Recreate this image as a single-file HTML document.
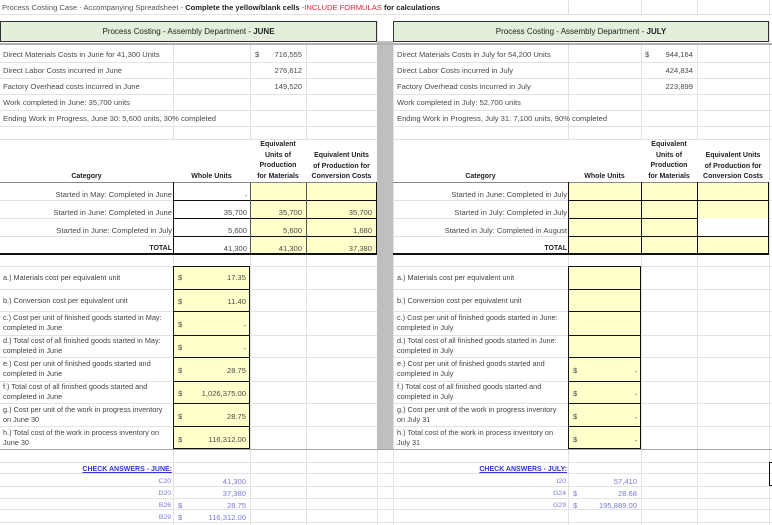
<!DOCTYPE html>
<html><head><meta charset="utf-8"><style>
*{margin:0;padding:0;box-sizing:border-box}
body{width:772px;height:525px;position:relative;background:#fff;overflow:hidden;font-family:"Liberation Sans",sans-serif;font-size:7.6px;color:#4a4a4a}
.h{position:absolute;left:0;width:772px;height:1px;background:#e2e2e2}
.v{position:absolute;top:0;height:525px;width:1px;background:#e2e2e2}
.a{position:absolute;white-space:nowrap;line-height:9px}
.r{text-align:right}
.c{text-align:center}
.y{position:absolute;background:#ffffcc}
.b{position:absolute;background:#111}
.g{position:absolute;background:#c0c0c0}
.bold{font-weight:bold;color:#222;font-size:7px}
.hd{position:absolute;text-align:center;font-weight:bold;color:#222;font-size:7px;line-height:10.5px;white-space:nowrap}
.q{position:absolute;line-height:10px;font-size:7.3px;color:#444;white-space:nowrap}
.lnk{color:#3434d0;text-decoration:underline;font-weight:bold;font-size:7px}
.pv{color:#7a7ad8}
</style></head><body>
<div class="h" style="top:14px"></div><div class="h" style="top:62px"></div><div class="h" style="top:78px"></div><div class="h" style="top:94px"></div><div class="h" style="top:110px"></div><div class="h" style="top:126px"></div><div class="h" style="top:139px"></div><div class="h" style="top:200px"></div><div class="h" style="top:218px"></div><div class="h" style="top:236px"></div><div class="h" style="top:266px"></div><div class="h" style="top:289px"></div><div class="h" style="top:311px"></div><div class="h" style="top:335px"></div><div class="h" style="top:357px"></div><div class="h" style="top:381px"></div><div class="h" style="top:403px"></div><div class="h" style="top:426px"></div><div class="h" style="top:462px"></div><div class="h" style="top:473px"></div><div class="h" style="top:486px"></div><div class="h" style="top:498px"></div><div class="h" style="top:509px"></div><div class="h" style="top:522px"></div>
<div class="v" style="left:173px"></div><div class="v" style="left:250px"></div><div class="v" style="left:306px"></div><div class="v" style="left:377px"></div><div class="v" style="left:393px"></div><div class="v" style="left:568px"></div><div class="v" style="left:641px"></div><div class="v" style="left:697px"></div><div class="v" style="left:769px"></div>
<div style="position:absolute;left:1px;top:15px;width:770px;height:6px;background:#fff"></div>
<div style="position:absolute;left:0;top:1px;width:460px;height:12px;background:#fff"></div>
<div class="g" style="left:377px;top:41px;width:16px;height:408px;background:#bfbfbf"></div>
<div class="g" style="left:0;top:43px;width:772px;height:2px;background:#b0b0b0"></div>
<div class="g" style="left:0;top:449px;width:772px;height:1px;background:#a8a8a8"></div>
<div class="a" style="left:2px;top:3px;color:#555">Process Costing Case - Accompanying Spreadsheet - <b style="color:#222">Complete the yellow/blank cells</b> <span style="color:#e8233a">-INCLUDE FORMULAS</span> <b style="color:#222">for calculations</b></div>
<div style="position:absolute;left:0;top:21px;width:377px;height:21px;background:#e2efda;border:1px solid #333"></div>
<div class="a c" style="left:0;top:27px;width:377px;color:#222;font-size:8px">Process Costing - Assembly Department - <b>JUNE</b></div>
<div style="position:absolute;left:393px;top:21px;width:376px;height:21px;background:#e2efda;border:1px solid #333"></div>
<div class="a c" style="left:393px;top:27px;width:376px;color:#222;font-size:8px">Process Costing - Assembly Department - <b>JULY</b></div>
<div class="a" style="left:3px;top:50px">Direct Materials Costs in June for 41,300 Units</div>
<div class="a" style="left:3px;top:66px">Direct Labor Costs incurred in June</div>
<div class="a" style="left:3px;top:82px">Factory Overhead costs incurred in June</div>
<div class="a" style="left:3px;top:98px">Work completed in June: 35,700 units</div>
<div class="a" style="left:3px;top:114px">Ending Work in Progress, June 30: 5,600 units, 30% completed</div>
<div class="a" style="left:255px;top:50px">$</div>
<div class="a r" style="left:250px;top:50px;width:52px">716,555</div>
<div class="a r" style="left:250px;top:66px;width:52px">276,612</div>
<div class="a r" style="left:250px;top:82px;width:52px">149,520</div>
<div class="a" style="left:397px;top:50px">Direct Materials Costs in July for 54,200 Units</div>
<div class="a" style="left:397px;top:66px">Direct Labor Costs incurred in July</div>
<div class="a" style="left:397px;top:82px">Factory Overhead costs incurred in July</div>
<div class="a" style="left:397px;top:98px">Work completed in July: 52,700 units</div>
<div class="a" style="left:397px;top:114px">Ending Work in Progress, July 31: 7,100 units, 90% completed</div>
<div class="a" style="left:645px;top:50px">$</div>
<div class="a r" style="left:641px;top:50px;width:52px">944,164</div>
<div class="a r" style="left:641px;top:66px;width:52px">424,834</div>
<div class="a r" style="left:641px;top:82px;width:52px">223,899</div>
<!-- left units table -->
<div style="position:absolute;left:0;top:140px;width:377px;height:42px;background:#fff"></div>
<div class="hd" style="left:0;top:172px;width:173px">Category</div>
<div class="hd" style="left:173px;top:172px;width:77px">Whole Units</div>
<div class="hd" style="left:250px;top:140px;width:56px">Equivalent<br>Units of<br>Production<br>for Materials</div>
<div class="hd" style="left:306px;top:151px;width:71px">Equivalent Units<br>of Production for<br>Conversion Costs</div>
<div class="y" style="left:250px;top:182px;width:127px;height:72px"></div>
<div class="g" style="left:0;top:182px;width:377px;height:1px;background:#888"></div>
<div class="b" style="left:173px;top:182px;width:1px;height:72px"></div>
<div class="b" style="left:173px;top:200px;width:204px;height:1px"></div>
<div class="b" style="left:173px;top:218px;width:204px;height:1px"></div>
<div class="b" style="left:173px;top:236px;width:204px;height:1px"></div>
<div class="b" style="left:0;top:253px;width:377px;height:2px"></div>
<div class="b" style="left:376px;top:182px;width:1px;height:72px"></div>
<div class="g" style="left:250px;top:183px;width:1px;height:71px;background:#555"></div>
<div class="g" style="left:306px;top:183px;width:1px;height:71px;background:#555"></div>
<div class="a r" style="left:0;top:190px;width:172px">Started in May: Completed in June</div>
<div class="a r" style="left:0;top:208px;width:172px">Started in June: Completed in June</div>
<div class="a r" style="left:0;top:226px;width:172px">Started in June: Completed in July</div>
<div class="a r bold" style="left:0;top:244px;width:172px">TOTAL</div>
<div class="a r" style="left:173px;top:191px;width:74px">-</div>
<div class="a r" style="left:173px;top:208px;width:74px">35,700</div>
<div class="a r" style="left:173px;top:226px;width:74px">5,600</div>
<div class="a r" style="left:173px;top:244px;width:74px">41,300</div>
<div class="a r" style="left:250px;top:208px;width:52px">35,700</div>
<div class="a r" style="left:250px;top:226px;width:52px">5,600</div>
<div class="a r" style="left:250px;top:244px;width:52px">41,300</div>
<div class="a r" style="left:306px;top:208px;width:66px">35,700</div>
<div class="a r" style="left:306px;top:226px;width:66px">1,680</div>
<div class="a r" style="left:306px;top:244px;width:66px">37,380</div>
<!-- right units table -->
<div style="position:absolute;left:394px;top:140px;width:375px;height:42px;background:#fff"></div>
<div class="hd" style="left:393px;top:172px;width:175px">Category</div>
<div class="hd" style="left:568px;top:172px;width:73px">Whole Units</div>
<div class="hd" style="left:641px;top:140px;width:56px">Equivalent<br>Units of<br>Production<br>for Materials</div>
<div class="hd" style="left:697px;top:151px;width:72px">Equivalent Units<br>of Production for<br>Conversion Costs</div>
<div class="y" style="left:568px;top:182px;width:201px;height:72px"></div>
<div style="position:absolute;left:697px;top:218px;width:72px;height:18px;background:#fff"></div>
<div class="g" style="left:393px;top:182px;width:376px;height:1px;background:#888"></div>
<div class="b" style="left:568px;top:182px;width:1px;height:72px"></div>
<div class="b" style="left:641px;top:182px;width:1px;height:72px"></div>
<div class="b" style="left:697px;top:182px;width:1px;height:72px"></div>
<div class="b" style="left:768px;top:182px;width:1px;height:72px"></div>
<div class="b" style="left:568px;top:200px;width:201px;height:1px"></div>
<div class="b" style="left:568px;top:218px;width:129px;height:1px"></div>
<div class="b" style="left:568px;top:236px;width:201px;height:1px"></div>
<div class="b" style="left:393px;top:253px;width:376px;height:2px"></div>
<div class="a r" style="left:393px;top:190px;width:174px">Started in June: Completed in July</div>
<div class="a r" style="left:393px;top:208px;width:174px">Started in July: Completed in July</div>
<div class="a r" style="left:393px;top:226px;width:174px">Started in July: Completed in August</div>
<div class="a r bold" style="left:393px;top:244px;width:174px">TOTAL</div>
<!-- left questions -->
<div class="y" style="left:173px;top:266px;width:77px;height:183px;border:1px solid #111"></div>
<div class="b" style="left:173px;top:289px;width:77px;height:1px"></div><div class="b" style="left:173px;top:311px;width:77px;height:1px"></div><div class="b" style="left:173px;top:335px;width:77px;height:1px"></div><div class="b" style="left:173px;top:357px;width:77px;height:1px"></div><div class="b" style="left:173px;top:381px;width:77px;height:1px"></div><div class="b" style="left:173px;top:403px;width:77px;height:1px"></div><div class="b" style="left:173px;top:426px;width:77px;height:1px"></div>
<div class="q" style="left:3px;top:273px">a.) Materials cost per equivalent unit</div>
<div class="q" style="left:3px;top:296px">b.) Conversion cost per equivalent unit</div>
<div class="q" style="left:3px;top:313px">c.) Cost per unit of finished goods started in May:<br>completed in June</div>
<div class="q" style="left:3px;top:336px">d.) Total cost of all finished goods started in May:<br>completed in June</div>
<div class="q" style="left:3px;top:359px">e.) Cost per unit of finished goods started and<br>completed in June</div>
<div class="q" style="left:3px;top:382px">f.) Total cost of all finished goods started and<br>completed in June</div>
<div class="q" style="left:3px;top:405px">g.) Cost per unit of the work in progress inventory<br>on June 30</div>
<div class="q" style="left:3px;top:428px">h.) Total cost of the work in process inventory on<br>June 30</div>
<div class="a" style="left:178px;top:273px">$</div><div class="a r" style="left:173px;top:273px;width:73px">17.35</div>
<div class="a" style="left:178px;top:297px">$</div><div class="a r" style="left:173px;top:297px;width:73px">11.40</div>
<div class="a" style="left:178px;top:320px">$</div><div class="a r" style="left:173px;top:321px;width:73px">-</div>
<div class="a" style="left:178px;top:343px">$</div><div class="a r" style="left:173px;top:344px;width:73px">-</div>
<div class="a" style="left:178px;top:366px">$</div><div class="a r" style="left:173px;top:366px;width:73px">28.75</div>
<div class="a" style="left:178px;top:389px">$</div><div class="a r" style="left:173px;top:389px;width:73px">1,026,375.00</div>
<div class="a" style="left:178px;top:412px">$</div><div class="a r" style="left:173px;top:412px;width:73px">28.75</div>
<div class="a" style="left:178px;top:435px">$</div><div class="a r" style="left:173px;top:435px;width:73px">116,312.00</div>
<!-- right questions -->
<div class="y" style="left:568px;top:266px;width:73px;height:183px;border:1px solid #111"></div>
<div class="b" style="left:568px;top:289px;width:73px;height:1px"></div><div class="b" style="left:568px;top:311px;width:73px;height:1px"></div><div class="b" style="left:568px;top:335px;width:73px;height:1px"></div><div class="b" style="left:568px;top:357px;width:73px;height:1px"></div><div class="b" style="left:568px;top:381px;width:73px;height:1px"></div><div class="b" style="left:568px;top:403px;width:73px;height:1px"></div><div class="b" style="left:568px;top:426px;width:73px;height:1px"></div>
<div class="q" style="left:397px;top:273px">a.) Materials cost per equivalent unit</div>
<div class="q" style="left:397px;top:296px">b.) Conversion cost per equivalent unit</div>
<div class="q" style="left:397px;top:313px">c.) Cost per unit of finished goods started in June:<br>completed in July</div>
<div class="q" style="left:397px;top:336px">d.) Total cost of all finished goods started in June:<br>completed in July</div>
<div class="q" style="left:397px;top:359px">e.) Cost per unit of finished goods started and<br>completed in July</div>
<div class="q" style="left:397px;top:382px">f.) Total cost of all finished goods started and<br>completed in July</div>
<div class="q" style="left:397px;top:405px">g.) Cost per unit of the work in progress inventory<br>on July 31</div>
<div class="q" style="left:397px;top:428px">h.) Total cost of the work in process inventory on<br>July 31</div>
<div class="a" style="left:573px;top:366px">$</div><div class="a r" style="left:568px;top:367px;width:69px">-</div>
<div class="a" style="left:573px;top:389px">$</div><div class="a r" style="left:568px;top:390px;width:69px">-</div>
<div class="a" style="left:573px;top:412px">$</div><div class="a r" style="left:568px;top:413px;width:69px">-</div>
<div class="a" style="left:573px;top:435px">$</div><div class="a r" style="left:568px;top:436px;width:69px">-</div>
<!-- check answers -->
<div class="a r lnk" style="left:0;top:465px;width:172px">CHECK ANSWERS - JUNE:</div>
<div class="a r pv" style="left:0;top:477px;width:171px;font-size:6.8px">C20</div>
<div class="a r pv" style="left:0;top:489px;width:171px;font-size:6.8px">D20</div>
<div class="a r pv" style="left:0;top:501px;width:171px;font-size:6.8px">B26</div>
<div class="a r pv" style="left:0;top:513px;width:171px;font-size:6.8px">B29</div>
<div class="a pv" style="left:178px;top:501px">$</div><div class="a pv" style="left:178px;top:513px">$</div>
<div class="a r pv" style="left:173px;top:477px;width:73px">41,300</div>
<div class="a r pv" style="left:173px;top:489px;width:73px">37,380</div>
<div class="a r pv" style="left:173px;top:501px;width:73px">28.75</div>
<div class="a r pv" style="left:173px;top:513px;width:73px">116,312.00</div>
<div class="a r lnk" style="left:393px;top:465px;width:174px">CHECK ANSWERS - JULY:</div>
<div class="a r pv" style="left:393px;top:477px;width:173px;font-size:6.8px">I20</div>
<div class="a r pv" style="left:393px;top:489px;width:173px;font-size:6.8px">G24</div>
<div class="a r pv" style="left:393px;top:501px;width:173px;font-size:6.8px">G29</div>
<div class="a pv" style="left:573px;top:489px">$</div><div class="a pv" style="left:573px;top:501px">$</div>
<div class="a r pv" style="left:568px;top:477px;width:69px">57,410</div>
<div class="a r pv" style="left:568px;top:489px;width:69px">28.68</div>
<div class="a r pv" style="left:568px;top:501px;width:69px">195,889.00</div>
<div style="position:absolute;left:769px;top:462px;width:4px;height:24px;border:1px solid #111;border-right:none"></div>
</body></html>
